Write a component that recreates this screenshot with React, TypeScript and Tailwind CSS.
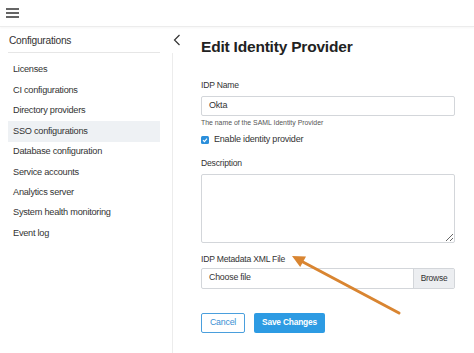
import React from 'react';

const menuItems = [
  'Licenses',
  'CI configurations',
  'Directory providers',
  'SSO configurations',
  'Database configuration',
  'Service accounts',
  'Analytics server',
  'System health monitoring',
  'Event log',
];

const Hamburger = () => (
  <svg width="13" height="10" viewBox="0 0 13 10" className="block">
    <path d="M0 1h13M0 5h13M0 9h13" stroke="#333" strokeWidth="1.4" />
  </svg>
);

const Sidebar = () => (
  <aside className="w-[172px] shrink-0 pl-2 pr-3">
    <div className="h-[26px] flex items-end pl-[1px] pb-[4px] text-[10.2px] tracking-[-0.25px] text-[#333] border-b border-[#e6e6e6]">
      Configurations
    </div>
    <ul className="mt-[7px]">
      {menuItems.map((item) => (
        <li
          key={item}
          className={
            'h-[20.45px] flex items-center pl-[5px] text-[9.2px] tracking-[-0.25px] text-[#333] ' +
            (item === 'SSO configurations' ? 'bg-[#eef1f4]' : '')
          }
        >
          {item}
        </li>
      ))}
    </ul>
  </aside>
);

// orange annotation arrow pointing at the file label
const Arrow = () => (
  <svg
    className="absolute left-0 top-0 pointer-events-none"
    width="474"
    height="353"
    viewBox="0 0 474 353"
  >
    <line x1="399" y1="313" x2="302" y2="261.5" stroke="#d98531" strokeWidth="3" strokeLinecap="round" />
    <polygon points="292,256 306,256.6 300.2,267" fill="#d98531" />
  </svg>
);

export default function App() {
  return (
    <div className="relative w-[474px] h-[353px] overflow-hidden bg-white font-['Liberation_Sans',Arial,sans-serif]">
      <header className="h-[27px] flex items-center pl-[6px] border-b border-[#ececec] shadow-[0_1px_2px_rgba(0,0,0,0.04)]">
        <Hamburger />
      </header>

      <div className="flex">
        <Sidebar />

        <div className="w-[10px] shrink-0 flex flex-col">
          <div className="h-[26px] flex items-center pl-[1px]">
            <svg width="8" height="12" viewBox="0 0 8 12">
              <path d="M6.5 1 1.5 6l5 5" fill="none" stroke="#333" strokeWidth="1.2" />
            </svg>
          </div>
          <div className="h-[300px] border-l border-[#ececec]" />
        </div>

        <main className="flex-1 pl-[19px] pr-[19px] text-[#222]">
          <h1 className="mt-[10px] text-[15.5px] font-semibold tracking-[-0.2px] leading-[20px] text-[#222]">
            Edit Identity Provider
          </h1>

          <label className="block mt-[23px] text-[8.6px] tracking-[-0.2px] leading-[10px] text-[#333]">IDP Name</label>
          <div className="mt-[6px] h-[20px] border border-[#d3d6da] rounded-[2px] flex items-center pl-[7px] text-[9px] tracking-[-0.2px] text-[#333]">
            Okta
          </div>
          <p className="mt-[2px] text-[6.9px] leading-[10px] text-[#555]">
            The name of the SAML Identity Provider
          </p>

          <div className="mt-[5px] flex items-center gap-[5px]">
            <span className="w-[8px] h-[8px] rounded-[1.5px] bg-[#2b8fdb] flex items-center justify-center">
              <svg width="6" height="6" viewBox="0 0 6 6">
                <path d="M1 3.2 2.4 4.6 5 1.6" fill="none" stroke="#fff" strokeWidth="1.1" />
              </svg>
            </span>
            <span className="text-[9px] tracking-[-0.2px] text-[#333]">Enable identity provider</span>
          </div>

          <label className="block mt-[11px] text-[8.6px] tracking-[-0.2px] leading-[10px] text-[#333]">Description</label>
          <textarea
            className="block mt-[6px] w-full h-[69px] border border-[#d3d6da] rounded-[2px] text-[10px] outline-none"
            readOnly
          />

          <label className="block mt-[11px] text-[8.6px] tracking-[-0.2px] leading-[10px] text-[#333]">IDP Metadata XML File</label>
          <div className="mt-[4px] h-[21px] border border-[#d3d6da] rounded-[2px] flex text-[8.8px] tracking-[-0.2px] text-[#333]">
            <div className="flex-1 flex items-center pl-[7px]">Choose file</div>
            <div className="w-[41px] flex items-center justify-center bg-[#eceef1] border-l border-[#d3d6da] text-[8.4px]">
              Browse
            </div>
          </div>

          <div className="mt-[24px] flex gap-[9px]">
            <button className="w-[44px] h-[20px] border border-[#4a9fdd] rounded-[2px] text-[8.8px] tracking-[-0.2px] text-[#3a8fd3] bg-white">
              Cancel
            </button>
            <button className="w-[71px] h-[20px] rounded-[2px] bg-[#2d9be3] text-[8.4px] tracking-[-0.2px] font-semibold text-white">
              Save Changes
            </button>
          </div>
        </main>
      </div>

      <Arrow />
    </div>
  );
}
